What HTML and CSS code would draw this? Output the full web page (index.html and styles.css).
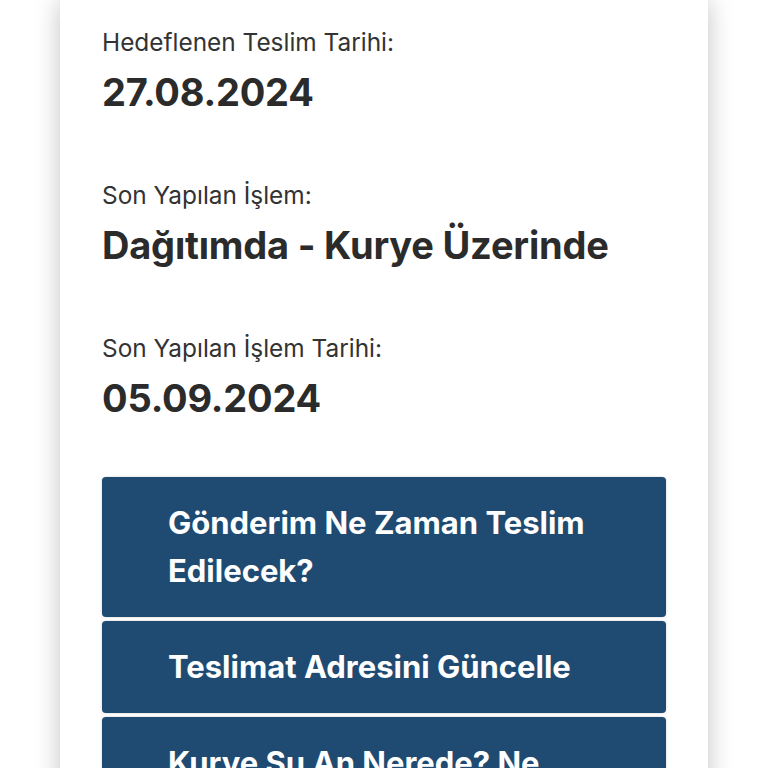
FILE: index.html
```html
<!DOCTYPE html>
<html lang="tr">
<head>
    <meta charset="UTF-8">
    <meta name="viewport" content="width=device-width, initial-scale=1.0">
    <title>Gönderi Takip</title>
    <link rel="stylesheet" href="styles.css">
</head>
<body>
    <div class="tracking-card">
        <div class="info-list">
            <div class="info-row">
                <div class="info-label">Hedeflenen Teslim Tarihi:</div>
                <div class="info-value">27.08.2024</div>
            </div>
            <div class="info-row">
                <div class="info-label">Son Yapılan İşlem:</div>
                <div class="info-value">Dağıtımda - Kurye Üzerinde</div>
            </div>
            <div class="info-row">
                <div class="info-label">Son Yapılan İşlem Tarihi:</div>
                <div class="info-value">05.09.2024</div>
            </div>
        </div>
        <div class="actions">
            <button class="action-btn">Gönderim Ne Zaman Teslim Edilecek?</button>
            <button class="action-btn">Teslimat Adresini Güncelle</button>
            <button class="action-btn">Kurye Şu An Nerede? Ne Zaman Gelecek?</button>
        </div>
    </div>
</body>
</html>
```

FILE: styles.css
```css
body {
    margin: 0;
    background-color: #fff;
    font-family: Inter, "Noto Sans", sans-serif;
    color: #2b2b2b;
    height: 768px;
    overflow: hidden;
}
.tracking-card {
    margin-left: 60px;
    width: 648px;
    box-sizing: border-box;
    padding: 25px 42px 40px;
    background-color: #fff;
    box-shadow: 0 0 24px rgba(0, 0, 0, 0.24);
    min-height: 900px;
}
.info-list {
    display: flex;
    flex-direction: column;
    gap: 53px;
}
.info-label {
    font-size: 24.4px;
    line-height: 34px;
    color: #333;
}
.info-value {
    font-size: 38px;
    font-weight: 700;
    line-height: 66px;
    letter-spacing: -0.2px;
    color: #2b2b2b;
}
.actions {
    display: flex;
    flex-direction: column;
    gap: 4px;
    margin-top: 46px;
}
.action-btn {
    display: block;
    width: 100%;
    text-align: left;
    background-color: #1f4b73;
    color: #fff;
    border: none;
    border-radius: 4px;
    padding: 22px 30px 22px 66px;
    font-family: Inter, "Noto Sans", sans-serif;
    font-size: 31px;
    font-weight: 700;
    line-height: 48px;
    box-shadow: 0 0 2px rgba(0, 0, 0, 0.25);
}
```
